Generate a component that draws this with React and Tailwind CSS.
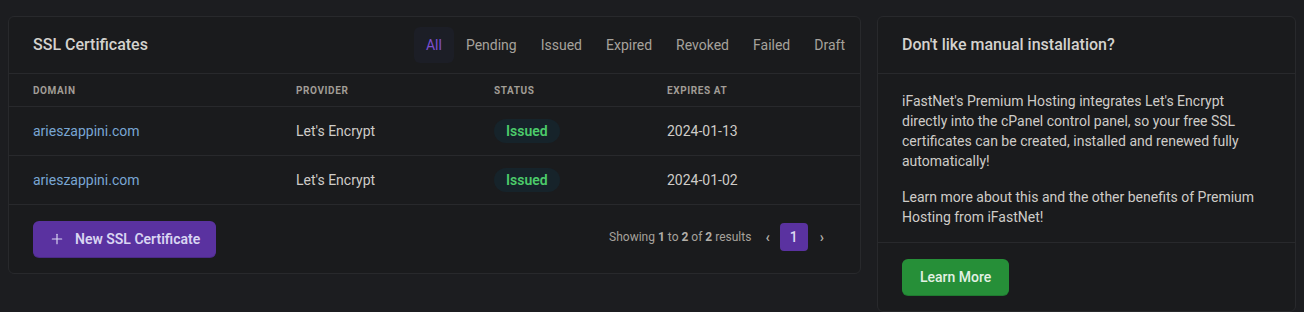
import { Plus } from "lucide-react";

const tabs = ["All", "Pending", "Issued", "Expired", "Revoked", "Failed", "Draft"];

const certificates = [
  { domain: "arieszappini.com", provider: "Let's Encrypt", status: "Issued", expires: "2024-01-13" },
  { domain: "arieszappini.com", provider: "Let's Encrypt", status: "Issued", expires: "2024-01-02" },
];

const cols = "grid grid-cols-[263px_198px_173px_1fr]";

const App = () => {
  return (
    <div className="min-h-screen bg-[#1c1d20] px-2 pt-4 font-['Roboto',sans-serif] text-[#c9c7c3]">
      <div className="flex items-start gap-[16px]">
        {/* Certificates card */}
        <div className="w-[853px] shrink-0 rounded-md border border-[#28292c] bg-[#1a1b1d]">
          <div className="flex h-[57px] items-center justify-between border-b border-[#28292c] pl-6 pr-[3px]">
            <h2 className="text-base font-medium text-[#d4d2ce]">SSL Certificates</h2>
            <nav className="flex items-center">
              {tabs.map((tab, i) => (
                <span
                  key={tab}
                  className={`rounded-md px-3 py-[8px] text-sm ${
                    i === 0 ? "bg-[#1c1e26] text-[#7c4fd0]" : "text-[#a6a29c]"
                  }`}
                >
                  {tab}
                </span>
              ))}
            </nav>
          </div>

          {/* Table head */}
          <div className={`${cols} h-[33px] items-center border-b border-[#28292c] text-[10px] font-bold uppercase tracking-[0.06em] text-[#a19d96]`}>
            <span className="px-6">Domain</span>
            <span className="px-6">Provider</span>
            <span className="px-6">Status</span>
            <span className="px-6">Expires At</span>
          </div>

          {/* Rows */}
          {certificates.map((cert, i) => (
            <div
              key={i}
              className={`${cols} h-[49px] items-center border-b border-[#28292c] text-sm`}
            >
              <span className="px-6 text-[#79a6d4]">{cert.domain}</span>
              <span className="px-6 text-[#cfccc8]">{cert.provider}</span>
              <span className="px-6">
                <span className="inline-flex h-[24px] items-center rounded-full bg-[#16232a] px-3 font-semibold text-[#4ccb6b]">
                  {cert.status}
                </span>
              </span>
              <span className="px-6 text-[#cfccc8]">{cert.expires}</span>
            </div>
          ))}

          {/* Footer */}
          <div className="flex h-[68px] items-center justify-between pl-6 pr-[36px]">
            <button className="flex h-[36px] items-center gap-[10px] rounded-md bg-[#5a32a0] pl-4 pr-4 text-sm font-semibold text-[#d9d5f2] shadow-[0_1px_0_#4a2a86]">
              <Plus className="h-4 w-4" strokeWidth={1.75} />
              New SSL Certificate
            </button>
            <div className="flex items-center pb-[5px] text-xs text-[#a6a29c]">
              <span>
                Showing <b className="font-bold text-[#b3afa9]">1</b> to{" "}
                <b className="font-bold text-[#b3afa9]">2</b> of{" "}
                <b className="font-bold text-[#b3afa9]">2</b> results
              </span>
              <span className="ml-[12px] px-[2px] text-sm font-bold text-[#b3afa9]">‹</span>
              <span className="ml-[8px] flex h-[28px] w-[28px] items-center justify-center rounded-[4px] bg-[#5a32a0] text-sm font-medium text-[#ddd8f2]">
                1
              </span>
              <span className="ml-[12px] text-sm font-bold text-[#b3afa9]">›</span>
            </div>
          </div>
        </div>

        {/* Premium hosting card */}
        <div className="w-[419px] shrink-0 rounded-md border border-[#28292c] bg-[#1a1b1d]">
          <div className="flex h-[57px] items-center border-b border-[#28292c] px-6">
            <h2 className="text-base font-medium text-[#d4d2ce]">Don't like manual installation?</h2>
          </div>
          <div className="space-y-4 border-b border-[#28292c] px-6 pb-[15px] pt-[17px] text-sm leading-5 text-[#cfccc8]">
            <p>
              iFastNet's Premium Hosting integrates Let's Encrypt directly into the cPanel control
              panel, so your free SSL certificates can be created, installed and renewed fully
              automatically!
            </p>
            <p>Learn more about this and the other benefits of Premium Hosting from iFastNet!</p>
          </div>
          <div className="flex h-[68px] items-center px-6">
            <button className="flex h-[36px] items-center rounded-md bg-[#268f38] px-[18px] text-sm font-medium text-[#e3f1e4] shadow-[0_1px_0_#1f7a30]">
              Learn More
            </button>
          </div>
        </div>
      </div>
    </div>
  );
};

export default App;
